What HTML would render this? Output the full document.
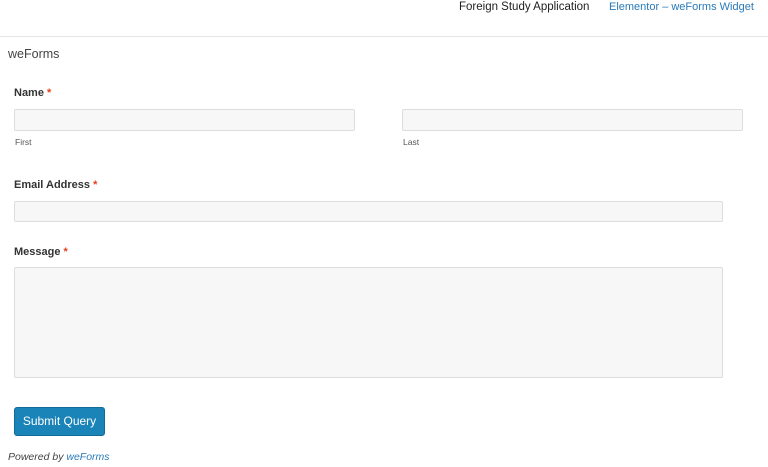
<!DOCTYPE html>
<html><head><style>
body{margin:0;width:768px;height:467px;background:#fff;font-family:"Liberation Sans",sans-serif;color:#333;position:relative;overflow:hidden}
.a{position:absolute}
.inp{position:absolute;background:#f7f7f7;border:1px solid #ddd;border-radius:2px;box-sizing:border-box}
.lab{position:absolute;font-size:11px;font-weight:bold;color:#333}
.lab span{color:#e2401c}
.sub{position:absolute;font-size:8.5px;color:#555}
</style></head><body>
<div class="a" style="left:459px;top:1px;font-size:11.5px;color:#222">Foreign Study Application</div>
<div class="a" style="left:609px;top:1px;font-size:11px;color:#2a7ab8">Elementor – weForms Widget</div>
<div class="a" style="left:0;top:36px;width:768px;height:1px;background:#e6e6e6"></div>
<div class="a" style="left:8px;top:47px;font-size:12.5px;color:#444">weForms</div>
<div class="lab" style="left:14px;top:87px">Name <span>*</span></div>
<div class="inp" style="left:14px;top:109px;width:341px;height:22px"></div>
<div class="sub" style="left:15px;top:137px">First</div>
<div class="inp" style="left:402px;top:109px;width:341px;height:22px"></div>
<div class="sub" style="left:403px;top:137px">Last</div>
<div class="lab" style="left:14px;top:179px">Email Address <span>*</span></div>
<div class="inp" style="left:14px;top:201px;width:709px;height:21px"></div>
<div class="lab" style="left:14px;top:246px">Message <span>*</span></div>
<div class="inp" style="left:14px;top:267px;width:709px;height:111px"></div>
<div class="a" style="left:14px;top:407px;width:91px;height:29px;background:#1a83b8;border:1px solid #126b97;border-radius:3px;box-sizing:border-box;color:#fff;font-size:12px;text-align:center;line-height:27px">Submit Query</div>
<div class="a" style="left:8px;top:451px;font-size:10.5px;font-style:italic;color:#444">Powered by <span style="color:#2a7ab8">weForms</span></div>
</body></html>
